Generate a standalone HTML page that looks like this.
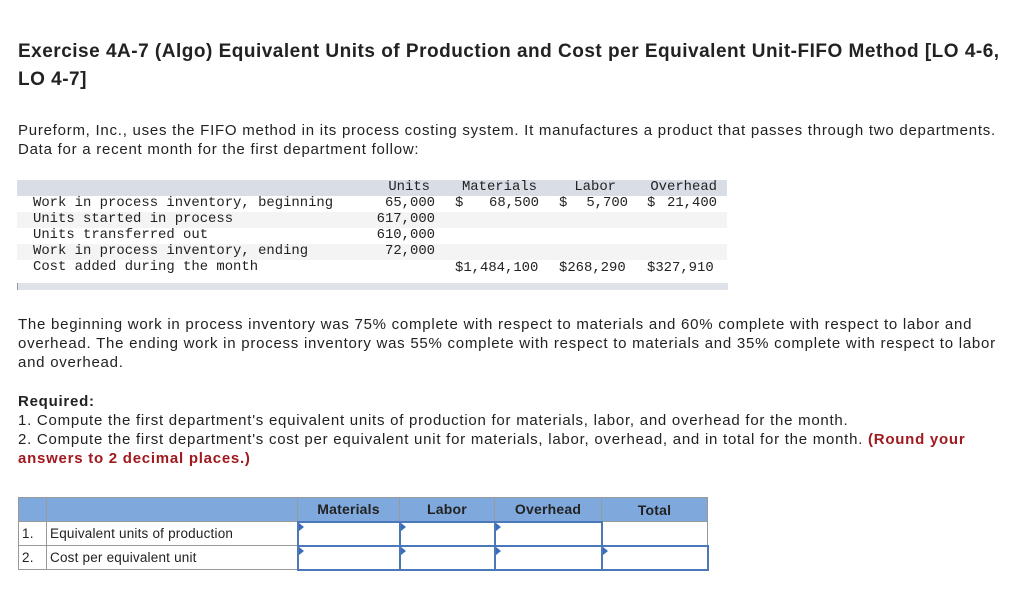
<!DOCTYPE html>
<html><head><meta charset="utf-8"><style>
body{margin:0;background:#fff;width:1024px;height:604px;position:relative;overflow:hidden;font-family:"Liberation Sans",Arial,sans-serif;color:#222}
.a{position:absolute;white-space:nowrap}
.t{font-weight:bold;font-size:19px;color:#222;letter-spacing:0.5px}
.p{font-size:15px;color:#222;letter-spacing:0.75px}
.m{font-family:"Liberation Mono",monospace;font-size:13.9px;color:#222}
.r{text-align:right}
.red{color:#a0191e;font-weight:bold}
table{position:absolute;left:18px;top:497px;border-collapse:collapse;font-size:13.5px;table-layout:fixed;width:689px;letter-spacing:0.2px}
td{border:1px solid #999;height:24px;padding:0 3px;box-sizing:border-box}
th{background:#7fa9dd;border:1px solid #999;height:24px;font-weight:bold;font-size:14px;color:#222;box-sizing:border-box}
td.i{border:2px solid #4a78b8;position:relative}
td.i:before{content:"";position:absolute;left:0;top:0;border-left:5px solid #3a6cbc;border-top:4px solid transparent;border-bottom:4px solid transparent}
</style></head><body>
<div class="a t" style="left:18px;top:41px">Exercise 4A-7 (Algo) Equivalent Units of Production and Cost per Equivalent Unit-FIFO Method [LO 4-6,</div>
<div class="a t" style="left:18px;top:69px">LO 4-7]</div>
<div class="a p" style="left:18px;top:122px">Pureform, Inc., uses the FIFO method in its process costing system. It manufactures a product that passes through two departments.</div>
<div class="a p" style="left:18px;top:141px">Data for a recent month for the first department follow:</div>

<div class="a" style="left:17px;top:180px;width:710px;height:16px;background:#d9dde6"></div>
<div class="a" style="left:17px;top:212px;width:710px;height:16px;background:#f4f4f4"></div>
<div class="a" style="left:17px;top:244px;width:710px;height:16px;background:#f4f4f4"></div>
<div class="a" style="left:17px;top:283px;width:710px;height:7px;background:#dfe2e8;border-left:1px solid #999"></div>
<div class="a m r" style="left:360px;top:179px;width:70px">Units</div>
<div class="a m r" style="left:440px;top:179px;width:97px">Materials</div>
<div class="a m r" style="left:550px;top:179px;width:66px">Labor</div>
<div class="a m r" style="left:630px;top:179px;width:87px">Overhead</div>
<div class="a m" style="left:33px;top:195px;line-height:16px">Work in process inventory, beginning<br>Units started in process<br>Units transferred out<br>Work in process inventory, ending<br>Cost added during the month</div>
<div class="a m r" style="left:360px;top:195px;width:75px;line-height:16px">65,000<br>617,000<br>610,000<br>72,000</div>
<div class="a m" style="left:455px;top:195px">$</div><div class="a m r" style="left:470px;top:195px;width:69px">68,500</div>
<div class="a m" style="left:559px;top:195px">$</div><div class="a m r" style="left:570px;top:195px;width:58px">5,700</div>
<div class="a m" style="left:647px;top:195px">$</div><div class="a m r" style="left:660px;top:195px;width:57px">21,400</div>
<div class="a m" style="left:455px;top:260px">$1,484,100</div>
<div class="a m" style="left:559px;top:260px">$268,290</div>
<div class="a m" style="left:647px;top:260px">$327,910</div>

<div class="a p" style="left:18px;top:316px">The beginning work in process inventory was 75% complete with respect to materials and 60% complete with respect to labor and</div>
<div class="a p" style="left:18px;top:335px">overhead. The ending work in process inventory was 55% complete with respect to materials and 35% complete with respect to labor</div>
<div class="a p" style="left:18px;top:354px">and overhead.</div>
<div class="a p" style="left:18px;top:393px;font-weight:bold">Required:</div>
<div class="a p" style="left:18px;top:412px">1. Compute the first department's equivalent units of production for materials, labor, and overhead for the month.</div>
<div class="a p" style="left:18px;top:431px">2. Compute the first department's cost per equivalent unit for materials, labor, overhead, and in total for the month. <span class="red">(Round your</span></div>
<div class="a p red" style="left:18px;top:450px">answers to 2 decimal places.)</div>

<table>
<colgroup><col style="width:28px"><col style="width:251px"><col style="width:102px"><col style="width:95px"><col style="width:107px"><col style="width:106px"></colgroup>
<tr><th></th><th></th><th>Materials</th><th>Labor</th><th>Overhead</th><th>Total</th></tr>
<tr><td>1.</td><td>Equivalent units of production</td><td class="i"></td><td class="i"></td><td class="i"></td><td></td></tr>
<tr><td>2.</td><td>Cost per equivalent unit</td><td class="i"></td><td class="i"></td><td class="i"></td><td class="i"></td></tr>
</table>
</body></html>
